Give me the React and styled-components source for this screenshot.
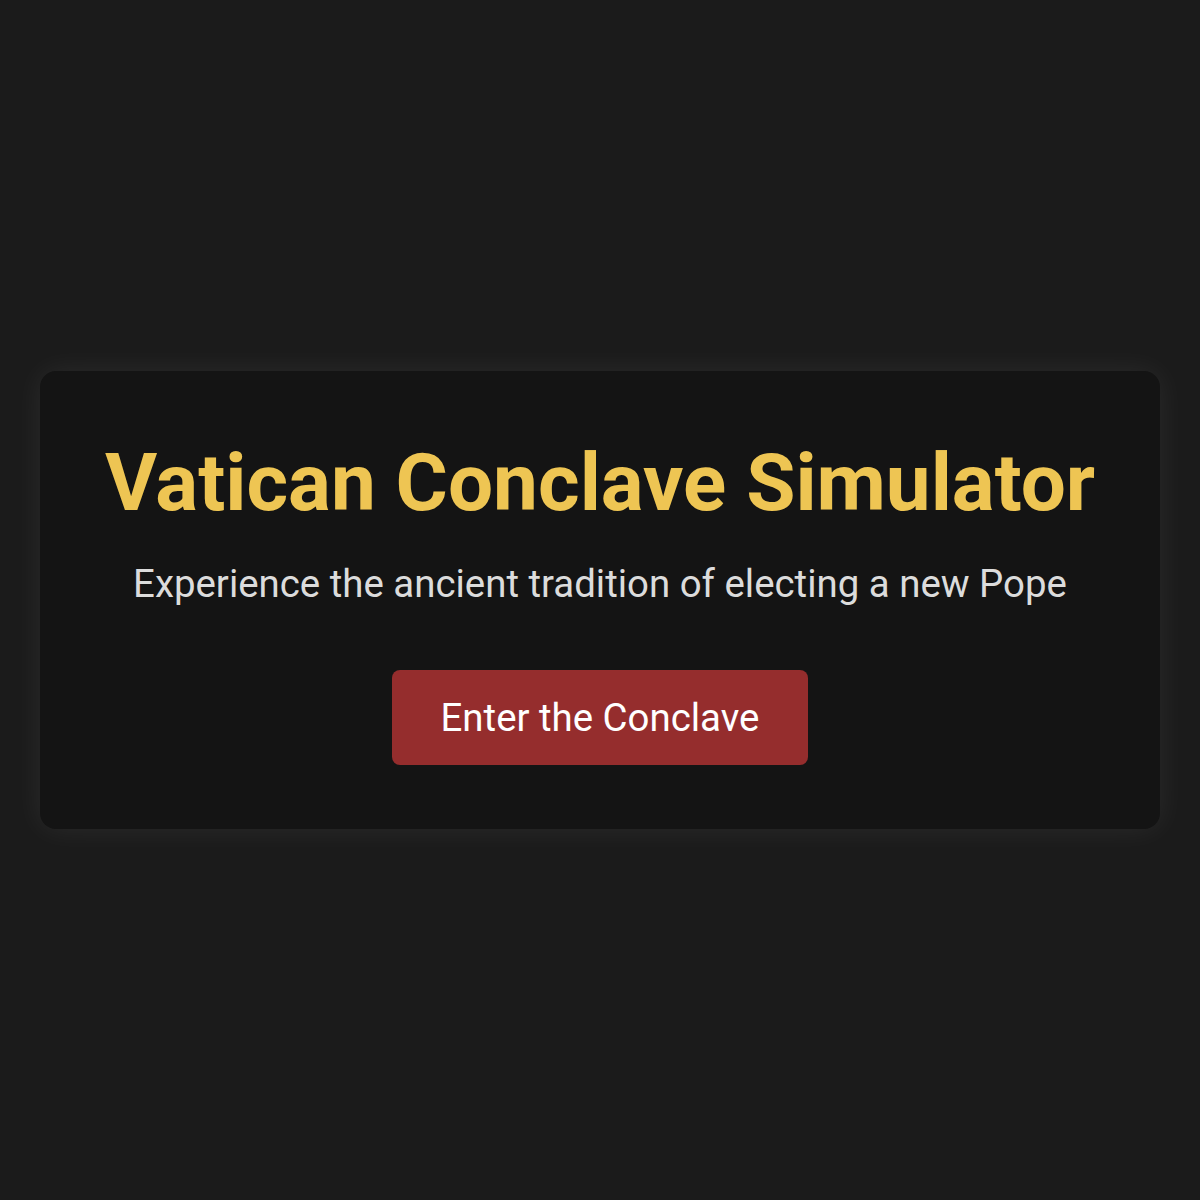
import React from "react";
import styled, { createGlobalStyle } from "styled-components";

const Global = createGlobalStyle`
  html, body { margin: 0; padding: 0; background: #1b1b1b; }
  body { font-family: Roboto, "Liberation Sans", sans-serif; }
`;

const Page = styled.main`
  min-height: 100vh;
  box-sizing: border-box;
  display: flex;
  align-items: center;
  justify-content: center;
  padding: 0 40px;
`;

const Card = styled.section`
  width: 100%;
  box-sizing: border-box;
  background: #141414;
  border-radius: 16px;
  padding: 64px 40px;
  text-align: center;
  box-shadow: 0 0 30px rgba(255, 255, 255, 0.07);
`;

const Title = styled.h1`
  margin: 0 0 24px;
  font-size: 80px;
  font-weight: 700;
  line-height: 1.2;
  color: #eec553;
`;

const Subtitle = styled.p`
  margin: 0 0 58px;
  font-size: 38.4px;
  line-height: 1.5;
  color: #dcdcdc;
`;

const Button = styled.button`
  font-family: inherit;
  font-size: 38.4px;
  color: #fff;
  background: #952d2d;
  border: none;
  border-radius: 8px;
  padding: 25px 49px;
  cursor: pointer;
`;

export default function App() {
  return (
    <>
      <Global />
      <Page>
        <Card>
          <Title>Vatican Conclave Simulator</Title>
          <Subtitle>Experience the ancient tradition of electing a new Pope</Subtitle>
          <Button>Enter the Conclave</Button>
        </Card>
      </Page>
    </>
  );
}
